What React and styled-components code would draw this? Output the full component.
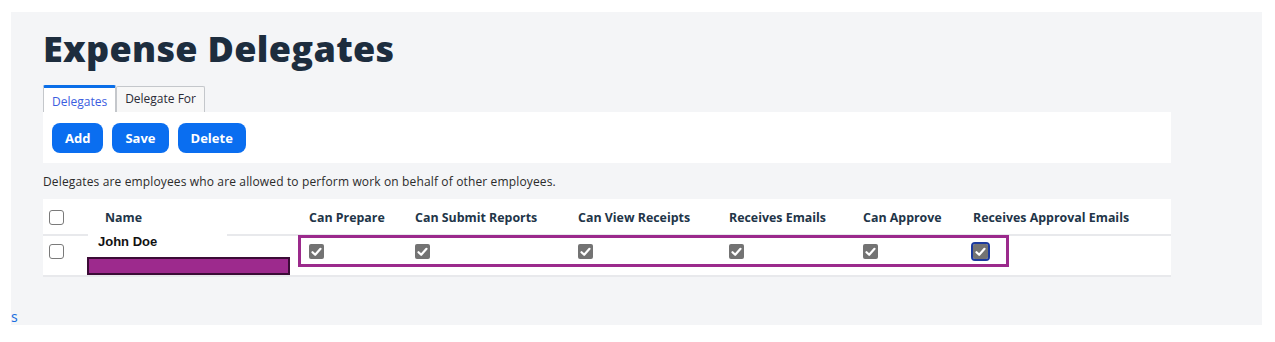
import React from 'react'
import styled, { createGlobalStyle } from 'styled-components'

const GlobalStyle = createGlobalStyle`
  html, body {
    margin: 0;
    padding: 0;
    background: #ffffff;
    font-family: 'Open Sans', 'Noto Sans', Arial, sans-serif;
  }
`

const Page = styled.div`
  padding: 12px 0 0 11px;
  width: 1251px;
`

const Panel = styled.main`
  background: #f4f5f7;
  height: 313px;
  padding: 0 91px 0 32px;
  display: flex;
  flex-direction: column;
  position: relative;
`

const Title = styled.h1`
  margin: 12px 0 0;
  height: 61px;
  font-size: 36px;
  font-weight: 800;
  letter-spacing: 0.3px;
  color: #1d2d3e;
  line-height: 50px;
`

const TabList = styled.div`
  display: flex;
  align-items: flex-end;
  height: 27px;
`

const TabButton = styled.button`
  font-family: inherit;
  font-size: 12px;
  height: ${({ $active }) => ($active ? '27px' : '26px')};
  padding: 0 ${({ $active }) => ($active ? '8px' : '8px')};
  background: ${({ $active }) => ($active ? '#ffffff' : '#f7f7f7')};
  color: ${({ $active }) => ($active ? '#3b5de0' : '#2b2b36')};
  border: 1px solid #c4c7cb;
  border-top: ${({ $active }) => ($active ? '3px solid #0a6ee8' : '1px solid #c4c7cb')};
  border-bottom: none;
  border-radius: 2px 2px 0 0;
  padding-top: ${({ $active }) => ($active ? '2px' : '0')};
  padding-bottom: ${({ $active }) => ($active ? '0' : '2px')};
  cursor: pointer;
`

const Toolbar = styled.div`
  background: #ffffff;
  height: 51px;
  display: flex;
  align-items: center;
  gap: 9px;
  padding: 0 9px;
`

const ActionButton = styled.button`
  font-family: inherit;
  font-size: 13px;
  font-weight: 700;
  color: #ffffff;
  background: #0a6ef0;
  border: none;
  border-radius: 8px;
  height: 30px;
  padding: 0 13px;
  margin-top: 1px;
  cursor: pointer;
`

const Description = styled.p`
  margin: 11px 0 0;
  font-size: 12px;
  letter-spacing: 0.14px;
  color: #2b2b2b;
  height: 25px;
  line-height: 15px;
`

const Table = styled.div`
  background: #ffffff;
  border-bottom: 2px solid #e8e9ec;
`

const Row = styled.div`
  display: grid;
  grid-template-columns: 56px 204px 106px 163px 151px 134px 110px 204px;
  align-items: ${({ $head }) => ($head ? 'center' : 'start')};
  height: ${({ $head }) => ($head ? '35px' : '39px')};
  border-bottom: ${({ $head }) => ($head ? '2px solid #e8e9ec' : 'none')};
  position: relative;
`

const HeadCell = styled.div`
  font-size: 12.4px;
  font-weight: 700;
  color: #223548;
  padding-left: 6px;
  white-space: nowrap;
  padding-top: 2px;
`

const Cell = styled.div`
  padding-left: 6px;
  padding-top: ${({ $top }) => $top ?? 8}px;
  position: relative;
`

const EmptyBox = styled.span`
  display: block;
  width: 13px;
  height: 13px;
  border: 1px solid #7a7a7a;
  border-radius: 3px;
  background: #ffffff;
`

const CheckedBox = styled.span`
  display: flex;
  align-items: center;
  justify-content: center;
  width: 15px;
  height: 15px;
  box-sizing: border-box;
  border-radius: 2px;
  background: #737373;
  outline: ${({ $focus }) => ($focus ? '2px solid #1c3a9e' : 'none')};
  outline-offset: 0;
`

const NameLabel = styled.div`
  position: absolute;
  left: -11px;
  top: -2px;
  width: 139px;
  height: 21px;
  background: #ffffff;
  font-family: 'Liberation Sans', Arial, sans-serif;
  font-size: 13px;
  font-weight: 700;
  color: #111111;
  padding-left: 10px;
  box-sizing: border-box;
  line-height: 16px;
`

const Redaction = styled.div`
  position: absolute;
  left: -12px;
  top: 21px;
  width: 203px;
  height: 18px;
  box-sizing: border-box;
  background: #9d2a8d;
  border: 2px solid #3b0c36;
`

const Highlight = styled.div`
  position: absolute;
  left: 255px;
  top: -1px;
  width: 711px;
  height: 32px;
  box-sizing: border-box;
  border: 3px solid #9b2a8c;
  pointer-events: none;
`

const FooterLink = styled.a`
  position: absolute;
  left: 0;
  bottom: -1px;
  font-family: 'Noto Sans', Arial, sans-serif;
  font-size: 14px;
  color: #1a6ee0;
  text-decoration: none;
`

const Check = () => (
  <svg width="11" height="10" viewBox="0 0 11 10">
    <path d="M1.5 5.2 L4.2 7.8 L9.5 1.8" fill="none" stroke="#ffffff" strokeWidth="2.2" strokeLinecap="round" strokeLinejoin="round" />
  </svg>
)

const columns = [
  'Can Prepare',
  'Can Submit Reports',
  'Can View Receipts',
  'Receives Emails',
  'Can Approve',
  'Receives Approval Emails',
]

export default function App() {
  return (
    <>
      <GlobalStyle />
      <Page>
        <Panel>
          <Title>Expense Delegates</Title>
          <TabList>
            <TabButton $active>Delegates</TabButton>
            <TabButton>Delegate For</TabButton>
          </TabList>
          <Toolbar>
            <ActionButton>Add</ActionButton>
            <ActionButton>Save</ActionButton>
            <ActionButton>Delete</ActionButton>
          </Toolbar>
          <Description>Delegates are employees who are allowed to perform work on behalf of other employees.</Description>
          <Table>
            <Row $head>
              <HeadCell><EmptyBox /></HeadCell>
              <HeadCell>Name</HeadCell>
              {columns.map((c) => (
                <HeadCell key={c}>{c}</HeadCell>
              ))}
            </Row>
            <Row>
              <Cell><EmptyBox /></Cell>
              <Cell $top={0}>
                <NameLabel>John Doe</NameLabel>
                <Redaction />
              </Cell>
              {columns.map((c, i) => (
                <Cell key={c}>
                  <CheckedBox $focus={i === columns.length - 1}><Check /></CheckedBox>
                </Cell>
              ))}
              <Highlight />
            </Row>
          </Table>
          <FooterLink href="#">s</FooterLink>
        </Panel>
      </Page>
    </>
  )
}
